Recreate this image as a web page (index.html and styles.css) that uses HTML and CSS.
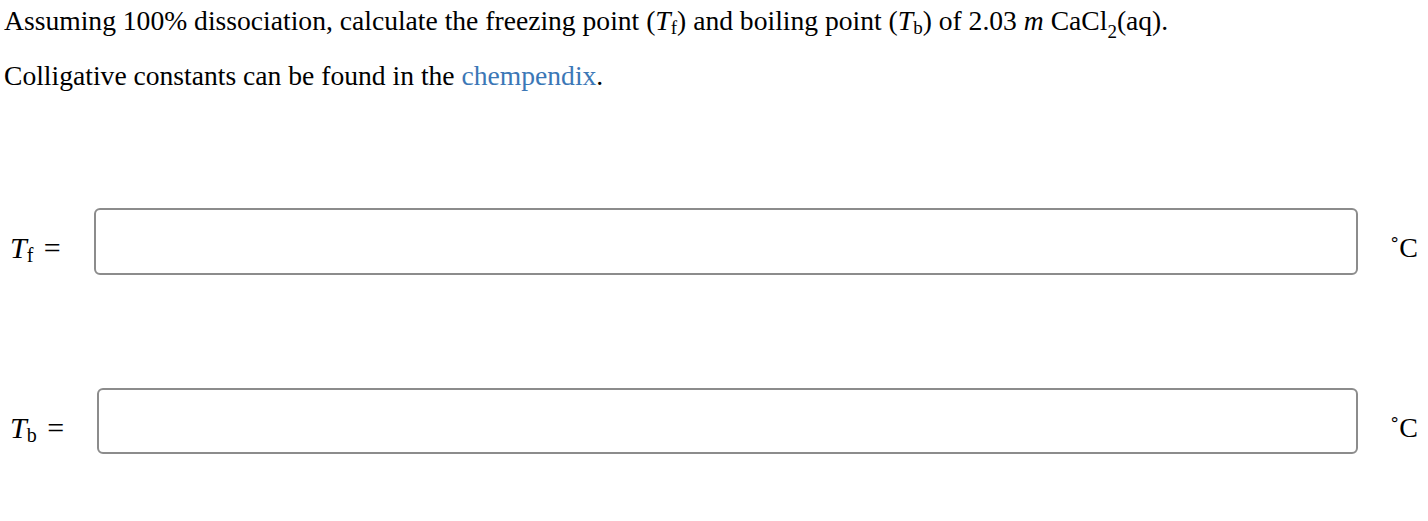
FILE: index.html
```html
<!DOCTYPE html>
<html>
<head>
<meta charset="utf-8">
<link rel="stylesheet" href="styles.css">
</head>
<body>
<div class="page">
  <p class="q">Assuming 100% dissociation, calculate the freezing point (<i>T</i><sub>f</sub>) and boiling point (<i>T</i><sub>b</sub>) of 2.03 <i>m</i> CaCl<sub class="low">2</sub>(aq).</p>
  <p class="q second">Colligative constants can be found in the <a class="link" href="#">chempendix</a>.</p>
  <div class="answers">
    <div class="row row-f">
      <span class="label"><i>T</i><sub>f</sub> <span class="eq">=</span></span>
      <div class="box"></div>
      <span class="unit">˚C</span>
    </div>
    <div class="row row-b">
      <span class="label"><i>T</i><sub>b</sub> <span class="eq">=</span></span>
      <div class="box"></div>
      <span class="unit">˚C</span>
    </div>
  </div>
</div>
</body>
</html>
```

FILE: styles.css
```css
html, body {
  margin: 0;
  padding: 0;
  background: #ffffff;
}
body {
  font-family: "Liberation Serif", "Times New Roman", serif;
  color: #000;
  font-size: 27.6px;
}
.page {
  padding: 5px 0 0 4px;
}
.q {
  margin: 0;
  line-height: 32px;
  white-space: nowrap;
}
.second {
  margin-top: 23px;
}
.q sub {
  font-size: 19px;
  vertical-align: -4px;
  line-height: 0;
}
.q sub.low {
  vertical-align: -8px;
}
.link {
  color: #3b77b6;
  text-decoration: none;
}
.answers {
  display: flex;
  flex-direction: column;
  gap: 113px;
  margin-top: 116px;
}
.row {
  display: flex;
  align-items: flex-start;
}
.label {
  box-sizing: border-box;
  padding-left: 6px;
  padding-top: 24px;
  width: 90px;
  white-space: nowrap;
  font-size: 30px;
  line-height: 32px;
}
.row-b .label {
  width: 93px;
}
.label sub {
  font-size: 20px;
  vertical-align: -4px;
  line-height: 0;
}
.eq {
  margin-left: 3px;
}
.box {
  flex: 1;
  box-sizing: border-box;
  height: 67px;
  border: 2.5px solid #8c8c8c;
  border-radius: 6px;
  margin-right: 32px;
}
.row-b .box {
  height: 66px;
}
.unit {
  padding-top: 24px;
  line-height: 32px;
  font-size: 28px;
  width: 38px;
  white-space: nowrap;
}
```
